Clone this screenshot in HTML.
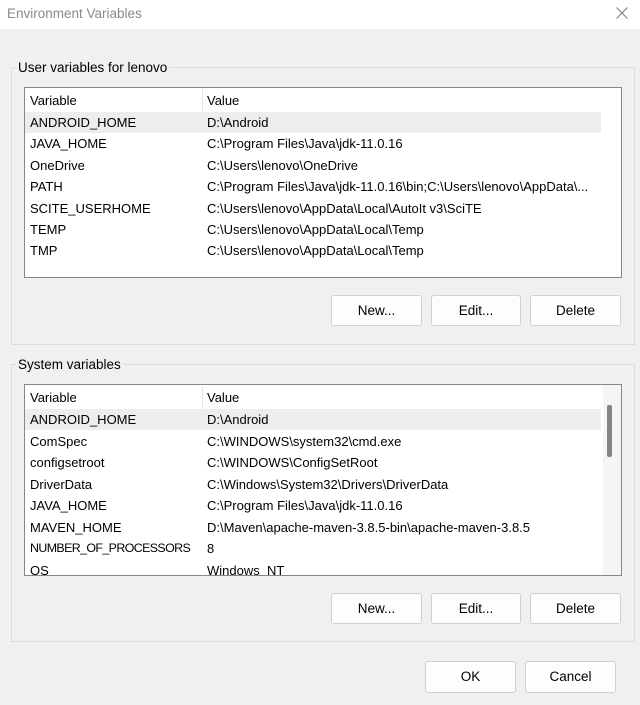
<!DOCTYPE html>
<html><head><style>
*{margin:0;padding:0;box-sizing:border-box}
body{width:640px;height:705px;background:#f0f0f0;font-family:"Liberation Sans",sans-serif;font-size:13px;color:#000;position:relative;overflow:hidden}
.a{position:absolute}
.title{left:0;top:0;width:640px;height:29px;background:#fff}
.title span{position:absolute;left:7px;top:6px;color:#8a8a8a;font-size:13.5px}
.grp{border:1px solid #dcdcdc}
.glabel{background:#f0f0f0;padding:0 2px;font-size:13.5px}
.list{background:#fff;border:1px solid #828790;overflow:hidden}
.row{position:absolute;left:0;width:576px;height:21px;line-height:21px}
.row .k{position:absolute;left:5px;white-space:nowrap}
.row .v{position:absolute;left:182px;white-space:nowrap}
.sel{background:#ededed}
.hdr .sep{position:absolute;left:177px;top:0;width:1px;height:23px;background:#e5e5e5}
.btn{background:#fdfdfd;border:1px solid #d0d0d0;border-radius:3px;text-align:center;line-height:29px;font-size:13.5px}
</style></head><body>
<div class="a title"><span>Environment Variables</span>
<svg class="a" style="left:616px;top:7px" width="12" height="12"><path d="M0.5 0.5L11.5 11.5M11.5 0.5L0.5 11.5" stroke="#7a7a7a" stroke-width="1"/></svg></div>

<div class="a grp" style="left:11px;top:67px;width:624px;height:278px"></div>
<div class="a glabel" style="left:16px;top:60px">User variables for lenovo</div>
<div class="a list" style="left:24px;top:87px;width:598px;height:191px">
 <div class="row hdr" style="top:1px;height:23px;line-height:23px"><span class="k">Variable</span><div class="sep"></div><span class="v">Value</span></div>
 <div class="row sel" style="top:24px"><span class="k">ANDROID_HOME</span><span class="v">D:\Android</span></div>
 <div class="row" style="top:45px"><span class="k">JAVA_HOME</span><span class="v">C:\Program Files\Java\jdk-11.0.16</span></div>
 <div class="row" style="top:67px"><span class="k">OneDrive</span><span class="v">C:\Users\lenovo\OneDrive</span></div>
 <div class="row" style="top:88px"><span class="k">PATH</span><span class="v">C:\Program Files\Java\jdk-11.0.16\bin;C:\Users\lenovo\AppData\...</span></div>
 <div class="row" style="top:110px"><span class="k">SCITE_USERHOME</span><span class="v">C:\Users\lenovo\AppData\Local\AutoIt v3\SciTE</span></div>
 <div class="row" style="top:131px"><span class="k">TEMP</span><span class="v">C:\Users\lenovo\AppData\Local\Temp</span></div>
 <div class="row" style="top:152px"><span class="k">TMP</span><span class="v">C:\Users\lenovo\AppData\Local\Temp</span></div>
</div>
<div class="a btn" style="left:331px;top:295px;width:91px;height:31px">New...</div>
<div class="a btn" style="left:431px;top:295px;width:90px;height:31px">Edit...</div>
<div class="a btn" style="left:530px;top:295px;width:91px;height:31px">Delete</div>

<div class="a grp" style="left:11px;top:364px;width:624px;height:278px"></div>
<div class="a glabel" style="left:16px;top:357px">System variables</div>
<div class="a list" style="left:24px;top:384px;width:598px;height:192px">
 <div class="row hdr" style="top:1px;height:23px;line-height:23px"><span class="k">Variable</span><div class="sep"></div><span class="v">Value</span></div>
 <div class="row sel" style="top:24px"><span class="k">ANDROID_HOME</span><span class="v">D:\Android</span></div>
 <div class="row" style="top:46px"><span class="k">ComSpec</span><span class="v">C:\WINDOWS\system32\cmd.exe</span></div>
 <div class="row" style="top:67px"><span class="k">configsetroot</span><span class="v">C:\WINDOWS\ConfigSetRoot</span></div>
 <div class="row" style="top:89px"><span class="k">DriverData</span><span class="v">C:\Windows\System32\Drivers\DriverData</span></div>
 <div class="row" style="top:110px"><span class="k">JAVA_HOME</span><span class="v">C:\Program Files\Java\jdk-11.0.16</span></div>
 <div class="row" style="top:132px"><span class="k">MAVEN_HOME</span><span class="v">D:\Maven\apache-maven-3.8.5-bin\apache-maven-3.8.5</span></div>
 <div class="row" style="top:153px"><span class="k" style="letter-spacing:-0.6px;font-size:12.4px">NUMBER_OF_PROCESSORS</span><span class="v">8</span></div>
 <div class="row" style="top:175px"><span class="k">OS</span><span class="v">Windows_NT</span></div>
 <div class="a" style="left:578px;top:0;width:19px;height:190px;background:#f5f5f5"></div>
 <div class="a" style="left:582px;top:20px;width:5px;height:52px;background:#858585;border-radius:2px"></div>
</div>
<div class="a btn" style="left:331px;top:593px;width:91px;height:31px">New...</div>
<div class="a btn" style="left:431px;top:593px;width:90px;height:31px">Edit...</div>
<div class="a btn" style="left:530px;top:593px;width:91px;height:31px">Delete</div>

<div class="a btn" style="left:425px;top:661px;width:91px;height:32px;line-height:30px">OK</div>
<div class="a btn" style="left:525px;top:661px;width:91px;height:32px;line-height:30px">Cancel</div>
</body></html>
